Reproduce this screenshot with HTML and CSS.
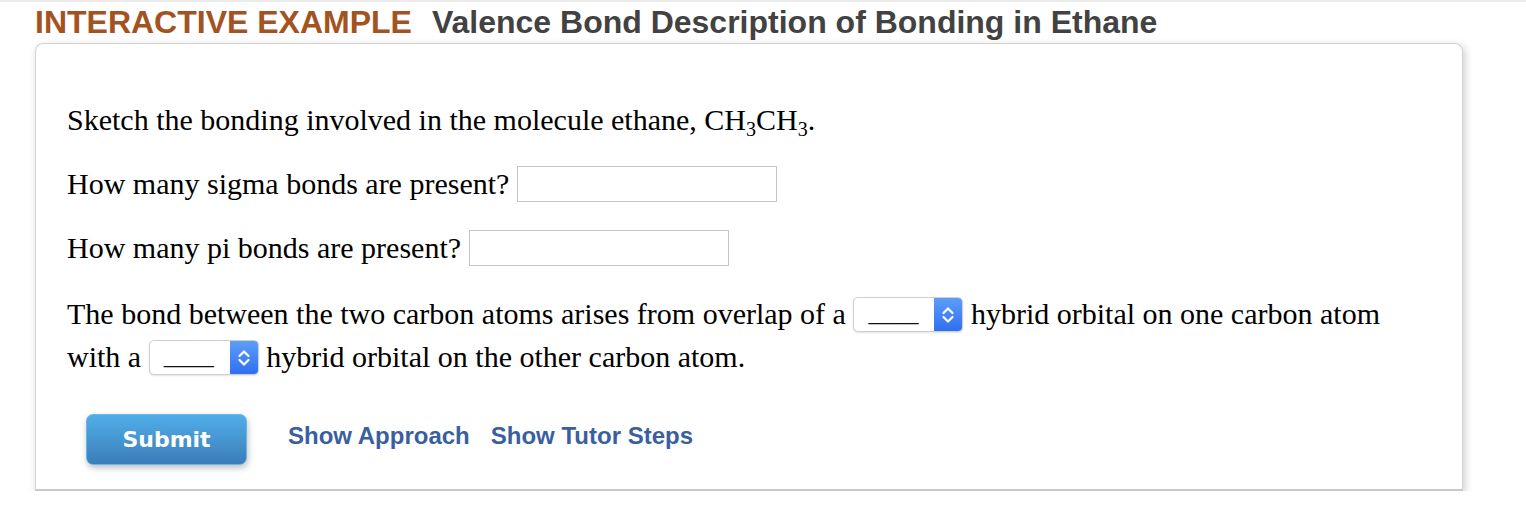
FILE: index.html
```html
<!DOCTYPE html>
<html>
<head>
<meta charset="utf-8">
<link rel="stylesheet" href="styles.css">
</head>
<body>
<div class="topbar"></div>
<h1 class="title"><span class="label">INTERACTIVE EXAMPLE</span><span class="name">Valence Bond Description of Bonding in Ethane</span></h1>
<div class="card">
  <p class="q">Sketch the bonding involved in the molecule ethane, CH<sub>3</sub>CH<sub>3</sub>.</p>
  <p class="q">How many sigma bonds are present? <span class="field"></span></p>
  <p class="q">How many pi bonds are present? <span class="field"></span></p>
  <p class="q q-wide">The bond between the two carbon atoms arises from overlap of a <span class="sel"><span class="sel-inner"><span class="sel-val">____</span><span class="sel-btn"><svg width="14" height="22" viewBox="0 0 14 22"><path d="M2.5 9 L7 4.5 L11.5 9" fill="none" stroke="#fff" stroke-width="2.2" stroke-linecap="round" stroke-linejoin="round"/><path d="M2.5 13 L7 17.5 L11.5 13" fill="none" stroke="#fff" stroke-width="2.2" stroke-linecap="round" stroke-linejoin="round"/></svg></span></span></span> hybrid orbital on one carbon atom<br>with a <span class="sel"><span class="sel-inner"><span class="sel-val">____</span><span class="sel-btn"><svg width="14" height="22" viewBox="0 0 14 22"><path d="M2.5 9 L7 4.5 L11.5 9" fill="none" stroke="#fff" stroke-width="2.2" stroke-linecap="round" stroke-linejoin="round"/><path d="M2.5 13 L7 17.5 L11.5 13" fill="none" stroke="#fff" stroke-width="2.2" stroke-linecap="round" stroke-linejoin="round"/></svg></span></span></span> hybrid orbital on the other carbon atom.</p>
  <div class="actions">
    <button class="submit">Submit</button>
    <a class="link">Show Approach</a>
    <a class="link">Show Tutor Steps</a>
  </div>
</div>
</body>
</html>
```
FILE: styles.css
```css
html, body {
  margin: 0;
  padding: 0;
  background: #fff;
}
.topbar {
  height: 2px;
  background: #ececec;
}
.title {
  margin: 2px 0 0 0;
  padding-left: 35px;
  font-family: "Liberation Sans", Arial, sans-serif;
  font-weight: bold;
  font-size: 32px;
  line-height: 36px;
  white-space: nowrap;
}
.title .label {
  color: #a3531f;
  margin-right: 20px;
}
.title .name {
  color: #424242;
}
.card {
  margin: 3px 0 0 35px;
  width: 1428px;
  height: 448px;
  box-sizing: border-box;
  border: 1px solid #d2d2d2;
  border-bottom: 2px solid #c8c8c8;
  border-radius: 8px 8px 0 0;
  box-shadow: 2px 3px 8px rgba(0, 0, 0, 0.2);
  padding: 54px 31px 0 31px;
  font-family: "Liberation Serif", "Times New Roman", serif;
  font-size: 30px;
  color: #000;
}
.q {
  margin: 0 0 21px 0;
  line-height: 43px;
  white-space: nowrap;
}
.q-wide {
  margin-top: 23px;
}
sub {
  font-size: 20px;
  line-height: 0;
  vertical-align: -6px;
}
.field {
  display: inline-block;
  box-sizing: border-box;
  width: 260px;
  height: 36px;
  border: 1px solid #c6c6c6;
  background: #fff;
  vertical-align: -8px;
}
.sel {
  display: inline-block;
  box-sizing: border-box;
  width: 110px;
  height: 35px;
  border: 1px solid #cfcfcf;
  border-radius: 5px;
  background: #fff;
  box-shadow: 0 1px 2px rgba(0, 0, 0, 0.12);
  vertical-align: -8px;
  overflow: hidden;
}
.sel-inner {
  display: flex;
  height: 100%;
}
.sel-val {
  flex: 1;
  font-family: "Liberation Serif", serif;
  font-size: 25px;
  line-height: 30px;
  padding-left: 14px;
  color: #111;
}
.sel-btn {
  width: 28px;
  display: flex;
  align-items: center;
  justify-content: center;
  background: linear-gradient(#5d9ef8, #2f6ff1);
}
.actions {
  display: flex;
  align-items: center;
  margin-top: 36px;
  padding-left: 19px;
}
.submit {
  width: 161px;
  height: 51px;
  box-sizing: border-box;
  border: 1px solid #6ab6ea;
  border-radius: 7px;
  background: linear-gradient(#50aee8, #3b7db9);
  color: #fff;
  font-family: "DejaVu Sans", Verdana, sans-serif;
  font-weight: bold;
  font-size: 22px;
  box-shadow: 1px 3px 6px rgba(0, 0, 0, 0.25);
  padding: 0;
  margin-right: 41px;
}
.link {
  font-family: "Liberation Sans", Arial, sans-serif;
  font-weight: bold;
  font-size: 24px;
  color: #3a5f9f;
  margin-right: 21px;
  margin-bottom: 7px;
}
```
